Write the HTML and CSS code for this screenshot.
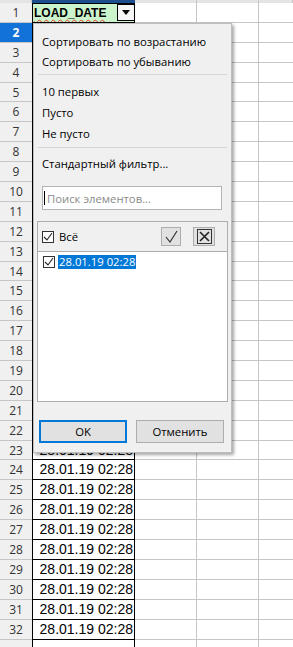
FILE: index.html
```html
<!DOCTYPE html>
<html lang="ru">
<head>
  <meta charset="UTF-8" />
  <title>LOAD_DATE</title>
  <link rel="stylesheet" href="styles.css">
</head>
<body>

  <!-- sheet (rows 2-22 sit under the popup, their values are not visible) -->
  <div class="sheet">
    <div class="colbar"><div></div><div class="sel"></div><div></div><div></div><div></div></div>

    <div class="row"><div class="rh">1</div><div class="a head"><span>LOAD_DATE</span><i class="filter-btn"></i></div><div class="b"></div><div class="c"></div><div class="d"></div></div>
    <div class="row"><div class="rh sel">2</div><div class="a"></div><div class="b"></div><div class="c"></div><div class="d"></div></div>
    <div class="row"><div class="rh">3</div><div class="a"></div><div class="b"></div><div class="c"></div><div class="d"></div></div>
    <div class="row"><div class="rh">4</div><div class="a"></div><div class="b"></div><div class="c"></div><div class="d"></div></div>
    <div class="row"><div class="rh">5</div><div class="a"></div><div class="b"></div><div class="c"></div><div class="d"></div></div>
    <div class="row"><div class="rh">6</div><div class="a"></div><div class="b"></div><div class="c"></div><div class="d"></div></div>
    <div class="row"><div class="rh">7</div><div class="a"></div><div class="b"></div><div class="c"></div><div class="d"></div></div>
    <div class="row"><div class="rh">8</div><div class="a"></div><div class="b"></div><div class="c"></div><div class="d"></div></div>
    <div class="row"><div class="rh">9</div><div class="a"></div><div class="b"></div><div class="c"></div><div class="d"></div></div>
    <div class="row"><div class="rh">10</div><div class="a"></div><div class="b"></div><div class="c"></div><div class="d"></div></div>
    <div class="row"><div class="rh">11</div><div class="a"></div><div class="b"></div><div class="c"></div><div class="d"></div></div>
    <div class="row"><div class="rh">12</div><div class="a"></div><div class="b"></div><div class="c"></div><div class="d"></div></div>
    <div class="row"><div class="rh">13</div><div class="a"></div><div class="b"></div><div class="c"></div><div class="d"></div></div>
    <div class="row"><div class="rh">14</div><div class="a"></div><div class="b"></div><div class="c"></div><div class="d"></div></div>
    <div class="row"><div class="rh">15</div><div class="a"></div><div class="b"></div><div class="c"></div><div class="d"></div></div>
    <div class="row"><div class="rh">16</div><div class="a"></div><div class="b"></div><div class="c"></div><div class="d"></div></div>
    <div class="row"><div class="rh">17</div><div class="a"></div><div class="b"></div><div class="c"></div><div class="d"></div></div>
    <div class="row"><div class="rh">18</div><div class="a"></div><div class="b"></div><div class="c"></div><div class="d"></div></div>
    <div class="row"><div class="rh">19</div><div class="a"></div><div class="b"></div><div class="c"></div><div class="d"></div></div>
    <div class="row"><div class="rh">20</div><div class="a"></div><div class="b"></div><div class="c"></div><div class="d"></div></div>
    <div class="row"><div class="rh">21</div><div class="a"></div><div class="b"></div><div class="c"></div><div class="d"></div></div>
    <div class="row"><div class="rh">22</div><div class="a"></div><div class="b"></div><div class="c"></div><div class="d"></div></div>
    <div class="row"><div class="rh">23</div><div class="a">28.01.19 02:28</div><div class="b"></div><div class="c"></div><div class="d"></div></div>
    <div class="row"><div class="rh">24</div><div class="a">28.01.19 02:28</div><div class="b"></div><div class="c"></div><div class="d"></div></div>
    <div class="row"><div class="rh">25</div><div class="a">28.01.19 02:28</div><div class="b"></div><div class="c"></div><div class="d"></div></div>
    <div class="row"><div class="rh">26</div><div class="a">28.01.19 02:28</div><div class="b"></div><div class="c"></div><div class="d"></div></div>
    <div class="row"><div class="rh">27</div><div class="a">28.01.19 02:28</div><div class="b"></div><div class="c"></div><div class="d"></div></div>
    <div class="row"><div class="rh">28</div><div class="a">28.01.19 02:28</div><div class="b"></div><div class="c"></div><div class="d"></div></div>
    <div class="row"><div class="rh">29</div><div class="a">28.01.19 02:28</div><div class="b"></div><div class="c"></div><div class="d"></div></div>
    <div class="row"><div class="rh">30</div><div class="a">28.01.19 02:28</div><div class="b"></div><div class="c"></div><div class="d"></div></div>
    <div class="row"><div class="rh">31</div><div class="a">28.01.19 02:28</div><div class="b"></div><div class="c"></div><div class="d"></div></div>
    <div class="row"><div class="rh">32</div><div class="a">28.01.19 02:28</div><div class="b"></div><div class="c"></div><div class="d"></div></div>
    <div class="row"><div class="rh"></div><div class="a"></div><div class="b"></div><div class="c"></div><div class="d"></div></div>
  </div>

  <!-- autofilter popup -->
  <div class="popup">
    <div class="item">Сортировать по возрастанию</div>
    <div class="item">Сортировать по убыванию</div>
    <div class="sep"></div>
    <div class="item tall">10 первых</div>
    <div class="item tall">Пусто</div>
    <div class="item tall">Не пусто</div>
    <div class="sep sep2"></div>
    <div class="item">Стандартный фильтр...</div>

    <div class="search"><i class="caret"></i><span>Поиск элементов...</span></div>

    <div class="listbox">
      <div class="list-head">
        <span class="cb"><svg width="10" height="10" viewBox="0 0 10 10"><polyline points="1,5 4,8 9,1" fill="none" stroke="#222" stroke-width="1.1"/></svg></span>
        <span class="all">Всё</span>
        <span class="icon-btn check"><svg width="15" height="15" viewBox="0 0 15 15"><polyline points="2,8 6,13 13,2" fill="none" stroke="#333" stroke-width="1.2"/></svg></span>
        <span class="icon-btn cross"><svg width="15" height="15" viewBox="0 0 15 15"><rect x="0.5" y="0.5" width="14" height="14" fill="none" stroke="#333"/><path d="M3 3 L12 12 M12 3 L3 12" stroke="#222" stroke-width="1.6"/></svg></span>
      </div>
      <div class="list-body">
        <div class="list-item">
          <span class="cb"><svg width="10" height="10" viewBox="0 0 10 10"><polyline points="1,5 4,8 9,1" fill="none" stroke="#222" stroke-width="1.1"/></svg></span>
          <span class="picked">28.01.19 02:28</span>
        </div>
      </div>
    </div>

    <div class="actions">
      <button class="btn ok">OK</button>
      <button class="btn">Отменить</button>
    </div>
  </div>

</body>
</html>
```

FILE: styles.css
```css
html, body {
  margin: 0;
  padding: 0;
  overflow: hidden;
  background: #fff;
  color: #000;
  font-family: "Open Sans", "Noto Sans", sans-serif;
  font-size: 11.3px;
  height: 100%;
}

.sheet {
  width: 100%;
}

.colbar,
.row {
  display: grid;
  grid-template-columns: 32px 103px 62px 62px 1fr;
}

.colbar {
  height: 3px;
}

.colbar div {
  background: #e4e4e4;
  box-sizing: border-box;
  border-right: 1px solid #c6c6c6;
}

.colbar .sel {
  background: #1d4f8e;
  border-right: none;
}

.row {
  height: 19.9px;
}

.row > div {
  box-sizing: border-box;
  border-bottom: 1px solid #c6c6c6;
  overflow: hidden;
  white-space: nowrap;
}

.rh {
  background: #f0f0f0;
  color: #333;
  text-align: center;
  font-size: 12px;
  line-height: 19px;
}

.rh.sel {
  background: #1372d8;
  color: #fff;
  font-weight: bold;
}

.row > .a {
  border-left: 1px solid #000;
  border-right: 1px solid #000;
  border-bottom: 1px solid #000;
  font-family: "Liberation Sans", Arial, sans-serif;
  font-size: 14px;
  line-height: 19px;
  text-align: right;
  padding-right: 1px;
}

.row > .a.head {
  background: #ccf4cc;
  border-top: 1px solid #000;
  display: flex;
  align-items: center;
  justify-content: space-between;
  padding: 0 0 0 1px;
  font-size: 12px;
  font-weight: bold;
  line-height: 16px;
}

.head span {
  text-decoration: underline wavy #e03a2a;
  text-decoration-thickness: 1px;
  text-underline-offset: 2px;
}

.filter-btn {
  width: 17px;
  height: 17px;
  box-sizing: border-box;
  border: 1px solid #000;
  border-right: none;
  background: #f6f6f6;
  display: flex;
  align-items: center;
  justify-content: center;
}

.filter-btn::after {
  content: "";
  border-left: 4px solid transparent;
  border-right: 4px solid transparent;
  border-top: 5px solid #000;
}

.row > .b,
.row > .c {
  border-right: 1px solid #c6c6c6;
}

/* popup */

.popup {
  position: absolute;
  left: 33px;
  top: 23px;
  width: 199px;
  height: 430px;
  box-sizing: border-box;
  background: #f0f0f0;
  border: 1px solid #bdbdbd;
  box-shadow: 2px 2px 3px rgba(0, 0, 0, 0.35);
  padding-top: 8px;
  display: flex;
  flex-direction: column;
}

.item {
  height: 20px;
  line-height: 20px;
  padding-left: 8px;
  white-space: nowrap;
}

.item.tall {
  height: 21px;
  line-height: 21px;
}

.sep {
  height: 1px;
  background: #d6d6d6;
  margin: 2px 4px 6px 4px;
}

.sep.sep2 {
  margin-top: 3px;
}

.search {
  margin: 12px 0 0 8px;
  width: 180px;
  height: 24px;
  box-sizing: border-box;
  background: #fff;
  border: 1px solid #b3b3b3;
  display: flex;
  align-items: center;
  color: #8a8a8a;
}

.caret {
  width: 1px;
  height: 14px;
  background: #000;
  margin: 0 2px 0 1px;
}

.listbox {
  margin: 11px 0 0 3px;
  width: 191px;
  height: 181px;
  box-sizing: border-box;
  border: 1px solid #adadad;
  display: flex;
  flex-direction: column;
}

.list-head {
  height: 30px;
  box-sizing: border-box;
  border-bottom: 1px solid #adadad;
  display: flex;
  align-items: center;
  padding-left: 4px;
}

.cb {
  width: 12px;
  height: 12px;
  box-sizing: border-box;
  border: 1px solid #333;
  background: #fff;
  display: flex;
  align-items: center;
  justify-content: center;
}

.all {
  margin-left: 5px;
  flex: 1;
}

.icon-btn {
  height: 19px;
  box-sizing: border-box;
  border: 1px solid #adadad;
  background: #e1e1e1;
  display: flex;
  align-items: center;
  justify-content: center;
}

.icon-btn.check {
  width: 20px;
}

.icon-btn.cross {
  width: 22px;
  margin: 0 12px 0 12px;
}

.list-body {
  flex: 1;
  background: #fff;
  padding: 3px 0 0 5px;
}

.list-item {
  display: flex;
  align-items: center;
  height: 14px;
}

.picked {
  margin-left: 3px;
  background: #0078d7;
  color: #fff;
  line-height: 14px;
  padding: 0 1px;
}

.actions {
  display: flex;
  gap: 9px;
  margin: 18px 0 0 5px;
}

.btn {
  width: 88px;
  height: 23px;
  box-sizing: border-box;
  border: 1px solid #adadad;
  background: #e1e1e1;
  font-family: "Open Sans", "Noto Sans", sans-serif;
  font-size: 11.3px;
  color: #000;
  padding: 0;
}

.btn.ok {
  border: 2px solid #0078d7;
}
```
